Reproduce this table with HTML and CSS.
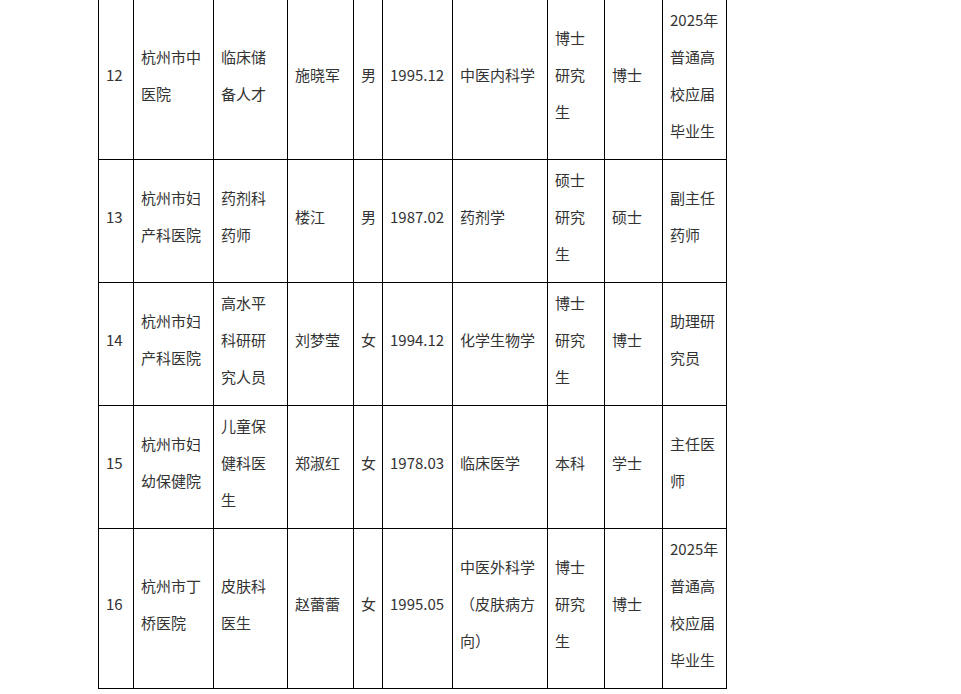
FILE: index.html
```html
<!DOCTYPE html>
<html lang="zh-CN">
<head>
<meta charset="utf-8">
<title>人员名单</title>
<link rel="stylesheet" href="styles.css">
</head>
<body>
<div class="page">
<table class="list">
  <colgroup>
    <col class="c-no">
    <col class="c-unit">
    <col class="c-post">
    <col class="c-name">
    <col class="c-sex">
    <col class="c-birth">
    <col class="c-major">
    <col class="c-edu">
    <col class="c-deg">
    <col class="c-title">
  </colgroup>
  <tbody>
    <tr>
      <td>12</td><td>杭州市中医院</td><td>临床储备人才</td><td>施晓军</td><td>男</td><td>1995.12</td><td>中医内科学</td><td>博士研究生</td><td>博士</td><td>2025年普通高校应届毕业生</td>
    </tr>
    <tr>
      <td>13</td><td>杭州市妇产科医院</td><td>药剂科药师</td><td>楼江</td><td>男</td><td>1987.02</td><td>药剂学</td><td>硕士研究生</td><td>硕士</td><td>副主任药师</td>
    </tr>
    <tr>
      <td>14</td><td>杭州市妇产科医院</td><td>高水平科研研究人员</td><td>刘梦莹</td><td>女</td><td>1994.12</td><td>化学生物学</td><td>博士研究生</td><td>博士</td><td>助理研究员</td>
    </tr>
    <tr>
      <td>15</td><td>杭州市妇幼保健院</td><td>儿童保健科医生</td><td>郑淑红</td><td>女</td><td>1978.03</td><td>临床医学</td><td>本科</td><td>学士</td><td>主任医师</td>
    </tr>
    <tr>
      <td>16</td><td>杭州市丁桥医院</td><td>皮肤科医生</td><td>赵蕾蕾</td><td>女</td><td>1995.05</td><td>中医外科学（皮肤病方向）</td><td>博士研究生</td><td>博士</td><td>2025年普通高校应届毕业生</td>
    </tr>
  </tbody>
</table>
</div>
</body>
</html>
```

FILE: styles.css
```css
html, body {
  margin: 0;
  padding: 0;
  background: #fff;
}

.page {
  padding-left: 98px;
  overflow: hidden;
  height: 694px;
}

.list {
  border-collapse: collapse;
  table-layout: fixed;
  width: 629px;
  font-family: "Noto Sans CJK SC", "Noto Sans", sans-serif;
  font-size: 15px;
  line-height: 37px;
  color: #333;
}

.list td {
  border: 1px solid #000;
  padding: 0.5px 7px 10.5px;
  vertical-align: middle;
  text-align: left;
  word-break: normal;
}

.list tr:first-child td {
  border-top: 0;
}

.c-no { width: 35px; }
.c-unit { width: 80px; }
.c-post { width: 74px; }
.c-name { width: 66px; }
.c-sex { width: 29px; }
.c-birth { width: 70px; }
.c-major { width: 95px; }
.c-edu { width: 57px; }
.c-deg { width: 58px; }
.c-title { width: 64px; }
```
